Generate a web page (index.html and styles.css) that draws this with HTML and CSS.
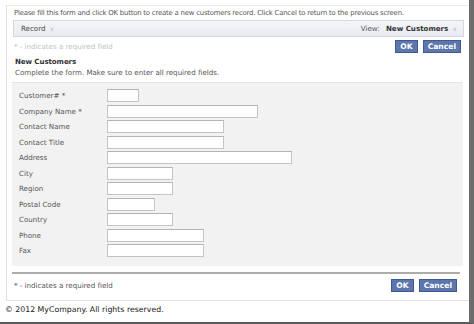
FILE: index.html
```html
<!DOCTYPE html>
<html>
<head>
<meta charset="utf-8">
<link rel="stylesheet" href="styles.css">
</head>
<body>
<div class="page">
  <div class="frame">
    <div class="intro">Please fill this form and click OK button to create a new customers record. Click Cancel to return to the previous screen.</div>
    <div class="toolbar">
      <span class="menu">Record <span class="chev">&#8744;</span></span>
      <span class="view"><span class="view-label">View:</span> <b>New Customers</b> <span class="chev">&#8744;</span></span>
    </div>
    <div class="actions">
      <span class="hint hint-light">* - indicates a required field</span>
      <span class="buttons"><button class="btn">OK</button><button class="btn">Cancel</button></span>
    </div>
    <div class="title">New Customers</div>
    <div class="desc">Complete the form. Make sure to enter all required fields.</div>
    <div class="panel">
      <div class="row"><label>Customer# *</label><span class="input w32"></span></div>
      <div class="row"><label>Company Name *</label><span class="input w150"></span></div>
      <div class="row"><label>Contact Name</label><span class="input w116"></span></div>
      <div class="row"><label>Contact Title</label><span class="input w116"></span></div>
      <div class="row"><label>Address</label><span class="input w184"></span></div>
      <div class="row"><label>City</label><span class="input w65"></span></div>
      <div class="row"><label>Region</label><span class="input w65"></span></div>
      <div class="row"><label>Postal Code</label><span class="input w48"></span></div>
      <div class="row"><label>Country</label><span class="input w65"></span></div>
      <div class="row"><label>Phone</label><span class="input w96"></span></div>
      <div class="row"><label>Fax</label><span class="input w96"></span></div>
    </div>
    <div class="actions bottom">
      <span class="hint">* - indicates a required field</span>
      <span class="buttons"><button class="btn">OK</button><button class="btn">Cancel</button></span>
    </div>
  </div>
  <div class="footer">&copy; 2012 MyCompany. All rights reserved.</div>
</div>
</body>
</html>
```

FILE: styles.css
```css
html, body {
  margin: 0;
  padding: 0;
  background: #fff;
}
.page {
  box-sizing: border-box;
  width: 474px;
  height: 324px;
  border-right: 5px solid #6c6c6c;
  border-bottom: 2px solid #5a5a5a;
  padding-top: 5px;
  font-family: Tahoma, "DejaVu Sans", sans-serif;
  font-size: 7.1px;
  color: #444;
  overflow: hidden;
}
.frame {
  margin-left: 6px;
  height: 296px;
  box-sizing: border-box;
  border-left: 1px solid #e2e2e2;
  border-top: 1px solid #ececec;
  border-bottom: 1px solid #e2e2e2;
  padding: 0 5px 0 5px;
}
.intro {
  height: 14px;
  line-height: 14px;
  padding-left: 2px;
  color: #555;
  font-size: 6.9px;
  letter-spacing: -0.2px;
}
.toolbar {
  box-sizing: border-box;
  height: 17px;
  margin-left: 1px;
  width: 451px;
  border: 1px solid #d4d7de;
  background: linear-gradient(#f4f5f9, #e9ebf1);
  display: flex;
  align-items: center;
  justify-content: space-between;
  padding: 0 6px 0 7px;
  color: #444;
}
.chev {
  color: #b4b8c4;
  font-size: 6px;
  margin-left: 2px;
}
.view-label {
  color: #555;
  margin-right: 4px;
}
.view b {
  color: #333;
}
.actions {
  display: flex;
  align-items: center;
  justify-content: space-between;
  height: 19px;
  padding: 0 3px 0 2px;
  width: 447px;
}
.hint {
  color: #555;
}
.hint-light {
  color: #c2c2c2;
}
.buttons {
  display: flex;
  gap: 5px;
}
.btn {
  box-sizing: border-box;
  height: 13px;
  padding: 0 4px;
  margin: 0;
  border: 1px solid #3f5a93;
  background: #5d77ad;
  color: #fff;
  font-family: Tahoma, "DejaVu Sans", sans-serif;
  font-weight: bold;
  font-size: 7.6px;
  line-height: 11px;
}
.title {
  height: 11px;
  line-height: 11px;
  padding-left: 3px;
  font-weight: bold;
  color: #333;
  letter-spacing: -0.1px;
}
.desc {
  height: 12px;
  line-height: 11px;
  padding-left: 3px;
  color: #555;
  margin-bottom: 3px;
}
.panel {
  width: 451px;
  box-sizing: border-box;
  background: #f2f2f2;
  border-top: 1px solid #e4e4e4;
  padding: 5px 0 7px 7px;
}
.row {
  height: 15.5px;
  display: flex;
  align-items: center;
}
.row label {
  width: 88px;
  color: #555;
}
.input {
  box-sizing: border-box;
  height: 13px;
  background: #fff;
  border: 1px solid #c4c4c4;
  border-top-color: #b4b4b4;
}
.w32 { width: 32px; }
.w48 { width: 48px; }
.w65 { width: 66px; }
.w96 { width: 97px; }
.w116 { width: 117px; }
.w150 { width: 151px; }
.w184 { width: 185px; }
.bottom {
  margin-top: 6px;
  border-top: 2px solid #acacac;
  height: 26px;
  width: 448px;
  box-sizing: border-box;
}
.footer {
  padding-left: 5px;
  height: 17px;
  line-height: 17px;
  font-family: "DejaVu Sans", Verdana, sans-serif;
  font-size: 7.8px;
  color: #222;
}
```
